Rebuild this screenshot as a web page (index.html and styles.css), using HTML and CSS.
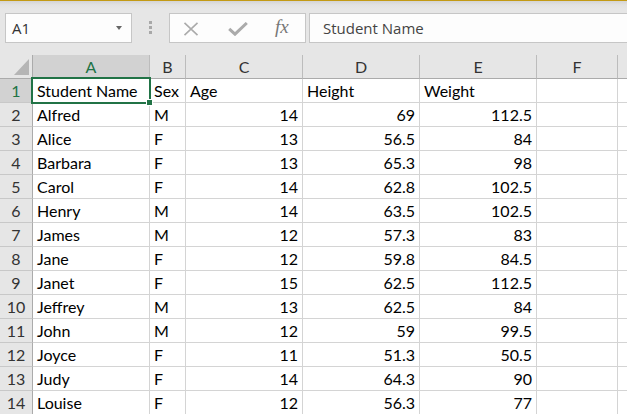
FILE: index.html
```html
<!DOCTYPE html>
<html>
<head>
<meta charset="utf-8">
<link rel="stylesheet" href="styles.css">
</head>
<body>
<div class="app">
  <div class="toolbar">
    <div class="namebox"><span class="ref">A1</span><span class="caret"></span></div>
    <div class="grip"><i></i><i></i><i></i></div>
    <div class="fbtns">
      <svg class="ic-x" width="16" height="14" viewBox="0 0 16 14"><path d="M1.5 0.8 L14.5 13.2 M14.5 0.8 L1.5 13.2" stroke="#ababab" stroke-width="1.6" fill="none"/></svg>
      <svg class="ic-ok" width="20" height="14" viewBox="0 0 20 14"><path d="M1.2 6.8 L7 12.2 L18.8 1" stroke="#ababab" stroke-width="3" fill="none"/></svg>
      <span class="fx">fx</span>
    </div>
    <div class="finput">Student Name</div>
  </div>
  <div class="sheet">
    <div class="corner"><span class="tri"></span></div>
    <div class="ch sel-h">A</div><div class="ch">B</div><div class="ch">C</div><div class="ch">D</div><div class="ch">E</div><div class="ch">F</div><div class="ch last"></div>
  </div>
  <div class="sheet" id="rows"></div>
  <div class="selbox"><span class="handle"></span></div>
</div>
<script>
var data=[["Student Name","Sex","Age","Height","Weight"],
["Alfred","M",14,69,112.5],["Alice","F",13,56.5,84],["Barbara","F",13,65.3,98],
["Carol","F",14,62.8,102.5],["Henry","M",14,63.5,102.5],["James","M",12,57.3,83],
["Jane","F",12,59.8,84.5],["Janet","F",15,62.5,112.5],["Jeffrey","M",13,62.5,84],
["John","M",12,59,99.5],["Joyce","F",11,51.3,50.5],["Judy","F",14,64.3,90],["Louise","F",12,56.3,77]];
var h="";
data.forEach(function(r,i){
  h+='<div class="rh'+(i==0?' sel-r':'')+'">'+(i+1)+'</div>';
  r.forEach(function(v){h+='<div class="c'+(typeof v==="number"?' num':'')+'">'+v+'</div>';});
  h+='<div class="c"></div><div class="c last"></div>';
});
document.getElementById("rows").innerHTML=h;
</script>
</body>
</html>
```
FILE: styles.css
```css
html,body{margin:0;padding:0;}
body{background:#fff;overflow:hidden;}
.app{position:relative;width:627px;height:414px;overflow:hidden;font-family:Lato,"Liberation Sans",sans-serif;}
.toolbar{border-top:1px solid #c39a14;background:linear-gradient(#d4d4d4 0,#e2e2e2 4px,#e6e6e6 8px);display:flex;align-items:flex-start;padding-top:12px;box-sizing:border-box;height:55px;}
.toolbar>*{flex-shrink:0;}
.namebox{margin-left:5px;width:127px;height:30px;box-sizing:border-box;border:1px solid #c6c6c6;background:#fdfdfd;display:flex;align-items:center;justify-content:space-between;padding:0 9px 0 6px;}
.ref{font-family:"Open Sans",sans-serif;font-size:15px;color:#333;}
.caret{width:0;height:0;border-left:3.5px solid transparent;border-right:3.5px solid transparent;border-top:4px solid #666;}
.grip{margin-left:17px;margin-top:8px;display:flex;flex-direction:column;gap:2px;}
.grip i{display:block;width:3px;height:3px;background:#a8a8a8;}
.fbtns{margin-left:17px;width:137px;height:30px;box-sizing:border-box;border:1px solid #c6c6c6;background:#fdfdfd;display:flex;align-items:center;}
.ic-x{margin-left:13px;margin-top:1px;}
.ic-ok{margin-left:29px;margin-top:2px;}
.fx{margin-left:27px;font-family:"Liberation Serif","DejaVu Serif",serif;font-style:italic;font-size:19px;color:#777;letter-spacing:0;margin-top:-2px;}
.finput{margin-left:3px;width:340px;height:30px;box-sizing:border-box;border:1px solid #c6c6c6;background:#fdfdfd;font-family:"Open Sans",sans-serif;font-size:15px;color:#444;line-height:28px;padding-left:13px;}
.sheet{display:grid;grid-template-columns:33px 117px 36px 117px 117px 117px 81px 40px;grid-auto-rows:24px;}
.corner{background:#e6e6e6;border-right:1px solid #ababab;border-bottom:1px solid #ababab;position:relative;box-sizing:border-box;}
.tri{position:absolute;right:3px;bottom:3px;width:0;height:0;border-left:15px solid transparent;border-bottom:16px solid #b5b5b5;}
.ch{background:#e6e6e6;border-right:1px solid #bcbcbc;border-bottom:1px solid #ababab;box-sizing:border-box;text-align:center;font-size:16px;color:#333;line-height:23px;}
.ch.sel-h{background:#d2d2d2;color:#217346;}
.rh{background:#e6e6e6;border-right:1px solid #ababab;border-bottom:1px solid #c8c8c8;box-sizing:border-box;text-align:center;font-size:16px;color:#333;line-height:24px;}
.rh.sel-r{background:#d2d2d2;color:#217346;}
.c{border-right:1px solid #d4d4d4;border-bottom:1px solid #d4d4d4;box-sizing:border-box;font-size:16px;color:#000;line-height:24px;padding:0 4px;white-space:nowrap;overflow:hidden;}
.c.num{text-align:right;}
.selbox{position:absolute;left:31px;top:77px;width:120px;height:27px;box-sizing:border-box;border:2px solid #217346;}
.handle{position:absolute;right:-4px;bottom:-4px;width:5px;height:5px;background:#217346;border:1px solid #fff;}
```
